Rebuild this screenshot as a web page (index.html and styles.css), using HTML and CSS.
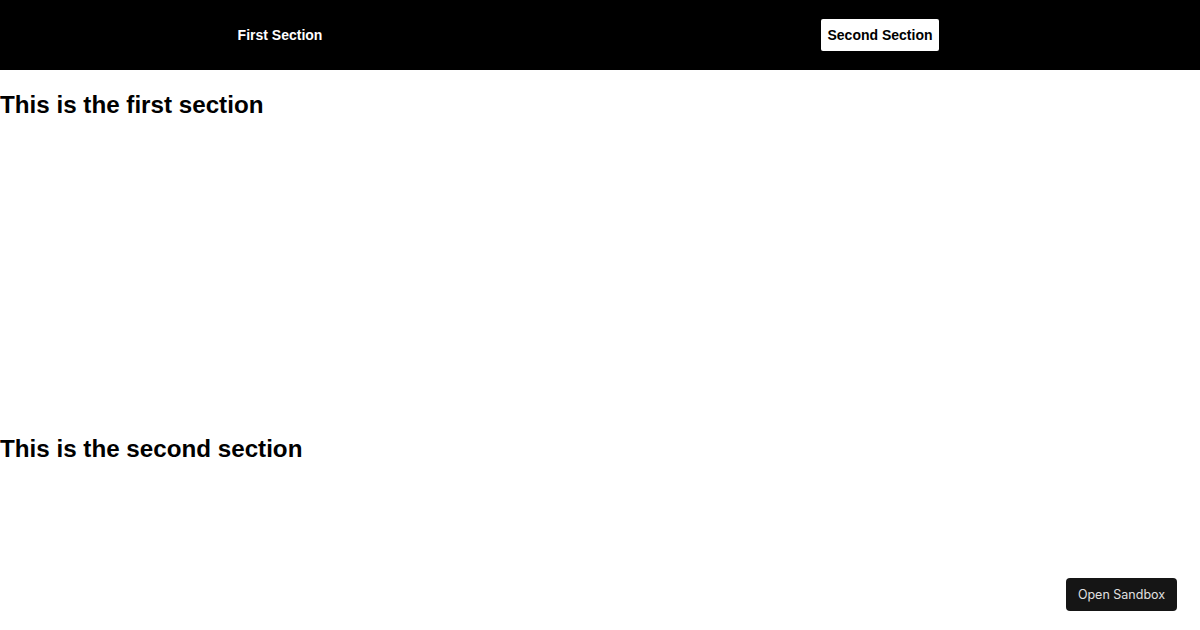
FILE: index.html
```html
<!DOCTYPE html>
<html>
<head>
<meta charset="utf-8">
<link rel="stylesheet" href="styles.css">
</head>
<body>
<header class="nav">
  <div class="nav-item"><a class="nav-link">First Section</a></div>
  <div class="nav-item"><a class="nav-link active">Second Section</a></div>
</header>
<section class="section">
  <h2 class="title">This is the first section</h2>
</section>
<section class="section">
  <h2 class="title">This is the second section</h2>
</section>
<button class="sandbox">Open Sandbox</button>
</body>
</html>
```

FILE: styles.css
```css
html, body {
  margin: 0;
  padding: 0;
  background: #fff;
  font-family: "Liberation Sans", Arial, sans-serif;
  color: #000;
}
.nav {
  height: 70px;
  background: #000;
  display: grid;
  grid-template-columns: 1fr 1fr;
  align-items: center;
}
.nav-item {
  display: flex;
  justify-content: center;
  padding-right: 40px;
}
.nav-link {
  font-size: 14px;
  font-weight: bold;
  line-height: 16px;
  padding: 8px 6px;
  color: #fff;
  border-radius: 2px;
}
.nav-link.active {
  background: #fff;
  color: #000;
}
.section {
  height: 323px;
}
.title {
  margin: 21px 0 20px;
  font-size: 24.2px;
  font-weight: bold;
}
.sandbox {
  position: fixed;
  right: 23px;
  bottom: 19px;
  width: 111px;
  height: 33px;
  padding: 0;
  border: none;
  border-radius: 4px;
  background: #151515;
  color: #e0e0e0;
  font-family: Inter, "Liberation Sans", sans-serif;
  font-size: 12.5px;
}
```
